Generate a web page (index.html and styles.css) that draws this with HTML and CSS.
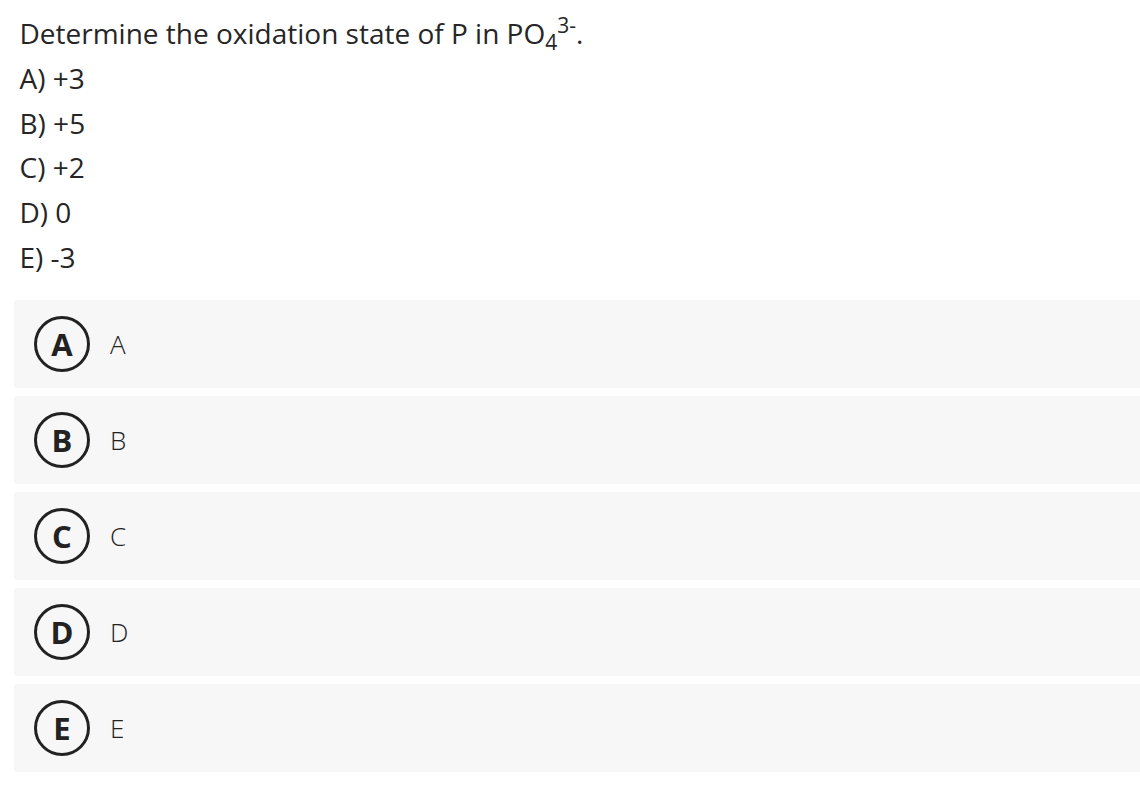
FILE: index.html
```html
<!DOCTYPE html>
<html lang="en">
<head>
    <meta charset="UTF-8">
    <title>Question</title>
    <link rel="stylesheet" href="styles.css">
</head>
<body>
    <div class="question">
        <p class="stem">Determine the oxidation state of P in PO<sub>4</sub><sup>3-</sup>.</p>
        <p class="line">A) +3</p>
        <p class="line">B) +5</p>
        <p class="line">C) +2</p>
        <p class="line">D) 0</p>
        <p class="line">E) -3</p>
    </div>

    <ul class="choices">
        <li class="choice"><span class="badge">A</span><span class="label">A</span></li>
        <li class="choice"><span class="badge">B</span><span class="label">B</span></li>
        <li class="choice"><span class="badge">C</span><span class="label">C</span></li>
        <li class="choice"><span class="badge">D</span><span class="label">D</span></li>
        <li class="choice"><span class="badge">E</span><span class="label">E</span></li>
    </ul>
</body>
</html>
```

FILE: styles.css
```css
html, body {
    overflow-x: hidden;
}
body {
    margin: 0;
    padding: 11px 0 0 14px;
    font-family: 'Open Sans', 'Noto Sans', sans-serif;
    color: #262626;
    background: #fff;
}
.question {
    padding-left: 5.5px;
    font-size: 28px;
    line-height: 44.75px;
}
.question p {
    margin: 0;
}
.stem sub,
.stem sup {
    font-size: 21px;
    line-height: 0;
    position: relative;
    vertical-align: baseline;
}
.stem sub {
    top: 6px;
}
.stem sup {
    top: -11px;
}
.choices {
    list-style: none;
    margin: 20.5px -30px 0 0;
    padding: 0;
}
.choice {
    display: flex;
    align-items: center;
    height: 88px;
    margin-bottom: 8px;
    padding-left: 20px;
    background: #f7f7f7;
    border-radius: 3px;
}
.badge {
    display: flex;
    align-items: center;
    justify-content: center;
    box-sizing: border-box;
    width: 56px;
    height: 56px;
    border: 3.5px solid #222;
    border-radius: 50%;
    font-size: 31px;
    font-weight: 700;
    color: #222;
    line-height: 1;
}
.label {
    margin-left: 20px;
    font-size: 26px;
    font-weight: 300;
    color: #222;
}
```
